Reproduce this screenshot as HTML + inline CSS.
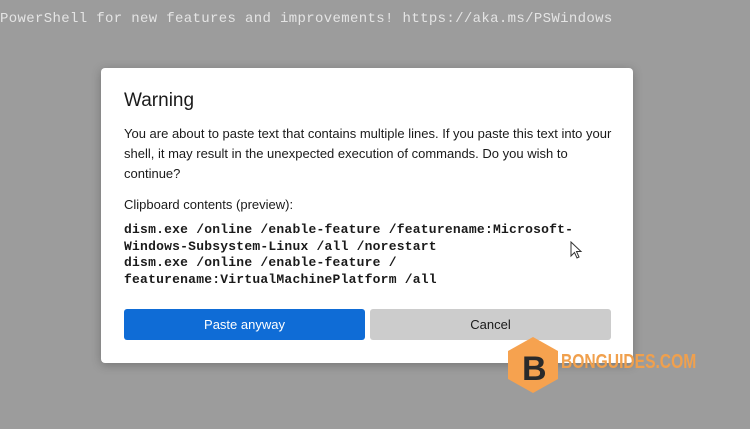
<!DOCTYPE html>
<html><head><style>
body{margin:0;width:750px;height:429px;background:#9c9c9c;position:relative;overflow:hidden;font-family:"Liberation Sans",sans-serif}
.ps{position:absolute;left:0;top:11px;font:14px "Liberation Mono",monospace;color:#e4e4e4;white-space:pre;letter-spacing:0.35px}
.dlg{position:absolute;left:101px;top:68px;width:532px;height:295px;background:#fff;border-radius:4px;box-shadow:0 2px 10px rgba(0,0,0,.25)}
.t{position:absolute;left:23px;top:22px;font-size:19px;color:#1a1a1a}
.b{position:absolute;left:23px;top:56px;width:490px;font-size:13px;line-height:20px;color:#1a1a1a}
.c{position:absolute;left:23px;top:129px;font-size:13px;color:#1a1a1a}
.m{position:absolute;left:23px;top:154px;font:bold 13px/16.5px "Liberation Mono",monospace;color:#1a1a1a;white-space:pre;letter-spacing:0.22px}
.btn{position:absolute;top:241px;height:31px;width:241px;border-radius:3px;font-size:13px;text-align:center;line-height:31px}
.p{left:23px;background:#0f6cd6;color:#fff}
.x{left:269px;background:#cccccc;color:#1a1a1a}
.logo{position:absolute;left:561px;top:351px;font:bold 20px "Liberation Sans",sans-serif;color:#f0a04d;white-space:nowrap;transform:scaleX(.78);transform-origin:left}
</style></head><body>
<div class="ps">PowerShell for new features and improvements! https://aka.ms/PSWindows</div>
<div class="dlg">
<div class="t">Warning</div>
<div class="b">You are about to paste text that contains multiple lines. If you paste this text into your shell, it may result in the unexpected execution of commands. Do you wish to continue?</div>
<div class="c">Clipboard contents (preview):</div>
<div class="m">dism.exe /online /enable-feature /featurename:Microsoft-
Windows-Subsystem-Linux /all /norestart
dism.exe /online /enable-feature /
featurename:VirtualMachinePlatform /all</div>
<div class="btn p">Paste anyway</div>
<div class="btn x">Cancel</div>
</div>
<svg style="position:absolute;left:570px;top:241px" width="14" height="20" viewBox="0 0 14 20"><path d="M1 1 L1 15 L4.5 11.5 L7 17 L9 16 L6.5 10.5 L11 10.5 Z" fill="#fff" stroke="#333" stroke-width="1"/></svg>
<svg style="position:absolute;left:507px;top:336px" width="52" height="58" viewBox="0 0 52 58"><polygon points="26,1 51,15 51,43 26,57 1,43 1,15" fill="#f6a24f"/><text x="15" y="44" font-family="Liberation Sans" font-weight="bold" font-size="34" fill="#2a2a2a">B</text></svg>
<div class="logo">BONGUIDES.COM</div>
</body></html>
